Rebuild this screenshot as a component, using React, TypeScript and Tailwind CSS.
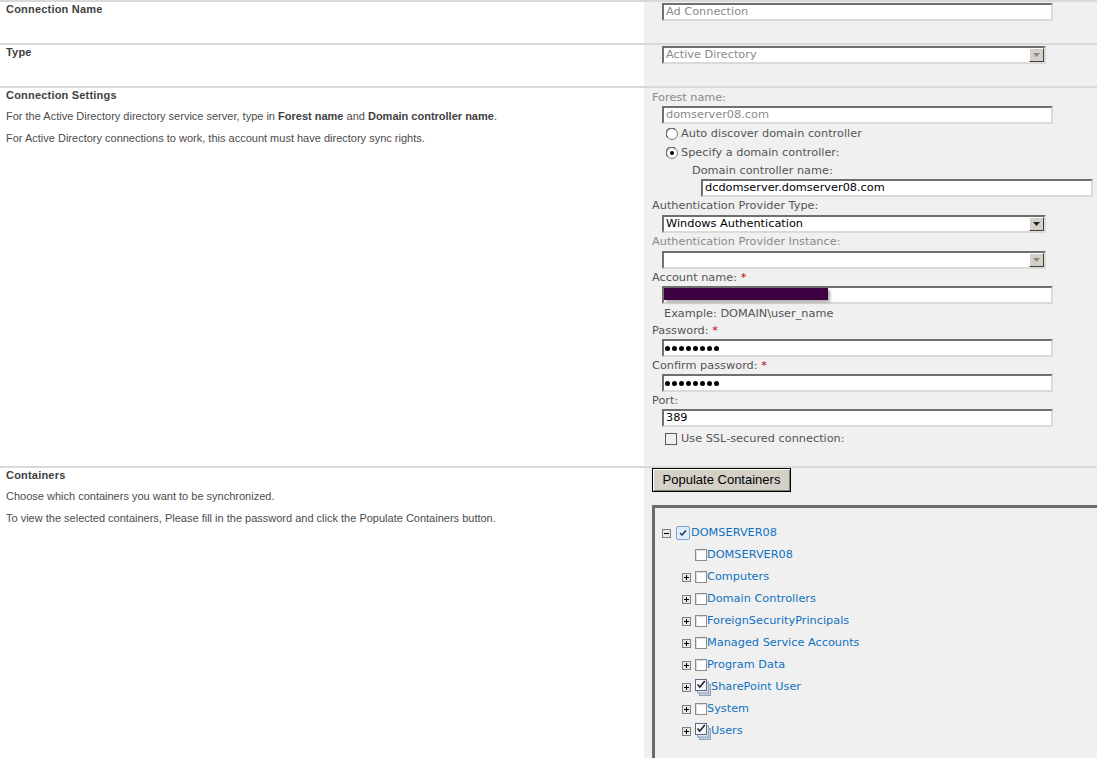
import React from "react";

const inputCls =
  "block h-[18px] bg-white border-solid border-t-2 border-l-2 border-b-2 border-r-2 border-t-[#6f6f6f] border-l-[#6f6f6f] border-b-[#dcdad5] border-r-[#dcdad5] px-[2px] text-[11.3px] leading-[14px] outline-none";

function Field({ value, className = "", muted = false }: { value: string; className?: string; muted?: boolean }) {
  return (
    <div className={`${inputCls} ${muted ? "text-[#8a8a8a]" : "text-black"} ${className}`}>{value}</div>
  );
}

function Dots() {
  return (
    <div className={`${inputCls} ml-[10px] flex w-[391px] items-center gap-[2px] pl-[1px]`}>
      {[0, 1, 2, 3, 4, 5, 6, 7].map((i) => (
        <span key={i} className="block h-[5px] w-[5px] rounded-full bg-black" />
      ))}
    </div>
  );
}

function SelectBox({ value, disabled = false, className = "" }: { value: string; disabled?: boolean; className?: string }) {
  return (
    <div className={`${inputCls} relative w-[384px] ${disabled ? "text-[#8a8a8a]" : "text-black"} ${className}`}>
      <span>{value}</span>
      <span className="absolute right-0 top-0 flex h-[14px] w-[15px] items-center justify-center bg-[#d4d0c8] border border-solid border-t-white border-l-white border-b-[#404040] border-r-[#404040]">
        <svg width="7" height="4" viewBox="0 0 7 4">
          <path d="M0 0h7L3.5 4z" fill={disabled ? "#8a8a8a" : "#202020"} />
        </svg>
      </span>
    </div>
  );
}

function Radio({ checked }: { checked?: boolean }) {
  return (
    <svg width="12" height="12" viewBox="0 0 12 12" className="shrink-0">
      <circle cx="6" cy="6" r="5.5" fill="#fff" stroke="#808080" />
      <path d="M1.5 9.5A5 5 0 0 1 9.5 1.5" fill="none" stroke="#404040" />
      {checked && <circle cx="6" cy="6" r="2" fill="#000" />}
    </svg>
  );
}

function Star() {
  return <span className="text-[#bf0000]"> *</span>;
}

function Expander({ open }: { open?: boolean }) {
  return (
    <svg width="9" height="9" viewBox="0 0 9 9" className="shrink-0">
      <rect x="0.5" y="0.5" width="8" height="8" fill="#e8e8e4" stroke="#7f7f7f" />
      <path d="M2 4.5h5" stroke="#000" />
      {!open && <path d="M4.5 2v5" stroke="#000" />}
    </svg>
  );
}

function Box({ state }: { state: "off" | "on" | "partial" }) {
  if (state === "on")
    return (
      <svg width="14" height="14" viewBox="0 0 14 14" className="shrink-0">
        <rect x="0.5" y="0.5" width="13" height="13" rx="1.5" fill="#dcecfa" stroke="#7aa6d0" />
        <path d="M4 7l2 2 4-4.5" fill="none" stroke="#1c2c4a" strokeWidth="1.4" />
      </svg>
    );
  if (state === "partial")
    return (
      <svg width="16" height="17" viewBox="0 0 16 17" className="shrink-0">
        <rect x="4.5" y="5.5" width="11" height="11" fill="#c3cfde" stroke="#93a3b8" />
        <rect x="2.5" y="3" width="11" height="11" fill="#d9e1eb" stroke="#93a3b8" />
        <rect x="0.5" y="0.5" width="11" height="11" fill="#f4f6f9" stroke="#5a6c85" />
        <path d="M2.5 5.5l2.3 2.5 5-6" fill="none" stroke="#202020" strokeWidth="1.5" />
      </svg>
    );
  return (
    <svg width="12" height="12" viewBox="0 0 12 12" className="shrink-0">
      <rect x="0.5" y="0.5" width="11" height="11" fill="#fff" stroke="#8c8c8c" />
      <path d="M1.5 10.5v-9h9" fill="none" stroke="#dadada" />
    </svg>
  );
}

const treeItems: { label: string; state: "off" | "partial" }[] = [
  { label: "Computers", state: "off" },
  { label: "Domain Controllers", state: "off" },
  { label: "ForeignSecurityPrincipals", state: "off" },
  { label: "Managed Service Accounts", state: "off" },
  { label: "Program Data", state: "off" },
  { label: "SharePoint User", state: "partial" },
  { label: "System", state: "off" },
  { label: "Users", state: "partial" },
];

function Section({
  title,
  children,
  desc,
  className = "",
  rightClass = "",
}: {
  title: string;
  desc?: React.ReactNode;
  children: React.ReactNode;
  className?: string;
  rightClass?: string;
}) {
  return (
    <div className={`grid grid-cols-[644px_1fr] border-t-2 border-[#d9d9d9] ${className}`}>
      <div className="bg-white px-[6px] font-['Liberation_Sans',Tahoma,sans-serif] text-[11px] text-[#4c4c4c]">
        <div className="font-bold leading-[14px] tracking-[0.2px] text-[#3f3f3f]">{title}</div>
        {desc}
      </div>
      <div className={`bg-[#f0f0f0] font-['DejaVu_Sans',Verdana,sans-serif] text-[11.3px] text-[#555] ${rightClass}`}>
        {children}
      </div>
    </div>
  );
}

export default function App() {
  return (
    <div className="h-[758px] w-[1097px] overflow-hidden bg-white">
      <Section title="Connection Name" className="h-[43px]" rightClass="pl-[18px] pt-[1px]">
        <Field value="Ad Connection" muted className="w-[391px]" />
      </Section>

      <Section title="Type" className="h-[43px]" rightClass="pl-[18px] pt-[1px]">
        <SelectBox value="Active Directory" disabled />
      </Section>

      <Section
        title="Connection Settings"
        className="h-[380px]"
        rightClass="pl-[8px] pt-[1px] leading-[17px]"
        desc={
          <div className="mt-[8px] flex flex-col gap-[9px] leading-[13px]">
            <p>
              For the Active Directory directory service server, type in <b className="text-[#3f3f3f]">Forest name</b> and{" "}
              <b className="text-[#3f3f3f]">Domain controller name</b>.
            </p>
            <p>For Active Directory connections to work, this account must have directory sync rights.</p>
          </div>
        }
      >
        <div className="text-[#8a8a8a]">Forest name:</div>
        <Field value="domserver08.com" muted className="ml-[10px] w-[391px]" />
        <div className="ml-[14px] flex h-[19px] items-center gap-[3px]">
          <Radio />
          <span>Auto discover domain controller</span>
        </div>
        <div className="ml-[14px] flex h-[19px] items-center gap-[3px]">
          <Radio checked />
          <span>Specify a domain controller:</span>
        </div>
        <div className="ml-[40px]">Domain controller name:</div>
        <Field value="dcdomserver.domserver08.com" className="ml-[49px] w-[392px]" />
        <div>Authentication Provider Type:</div>
        <SelectBox value="Windows Authentication" className="ml-[10px] mt-[1px]" />
        <div className="text-[#8a8a8a]">Authentication Provider Instance:</div>
        <SelectBox value="" disabled className="ml-[10px] mt-[1px]" />
        <div>
          Account name:
          <Star />
        </div>
        <div className={`${inputCls} relative ml-[10px] w-[391px]`}>
          <span className="absolute left-0 top-0 h-[12px] w-[164px] bg-[#3e0040] shadow-[2px_2px_3px_rgba(0,0,0,0.35)]" />
        </div>
        <div className="ml-[12px] mt-[1px]">Example: DOMAIN\user_name</div>
        <div>
          Password:
          <Star />
        </div>
        <Dots />
        <div>
          Confirm password:
          <Star />
        </div>
        <Dots />
        <div>Port:</div>
        <Field value="389" className="ml-[10px] w-[391px]" />
        <div className="ml-[13px] mt-[3px] flex items-center gap-[4px]">
          <span className="block h-[12px] w-[12px] border border-solid border-[#5a5a5a] bg-transparent" />
          <span>Use SSL-secured connection:</span>
        </div>
      </Section>

      <Section
        title="Containers"
        className="h-[292px]"
        rightClass="pl-[8px]"
        desc={
          <div className="mt-[8px] flex flex-col gap-[9px] leading-[13px]">
            <p>Choose which containers you want to be synchronized.</p>
            <p>To view the selected containers, Please fill in the password and click the Populate Containers button.</p>
          </div>
        }
      >
        <button className="block h-[24px] w-[139px] border border-solid border-black bg-[#d4d0c8] font-['Liberation_Sans',Arial,sans-serif] text-[13px] text-black shadow-[inset_1px_1px_0_#fff,inset_-1px_-1px_0_#808080]">
          Populate Containers
        </button>
        <div className="mt-[13px] h-[300px] border-l-[3px] border-t-[3px] border-solid border-[#6b6b6b] pl-[7px] pt-[14px] text-[#0f72c1]">
          <div className="flex h-[22px] items-center">
            <span className="mr-[5px] flex">
              <Expander open />
            </span>
            <Box state="on" />
            <span className="ml-[1px]">DOMSERVER08</span>
          </div>
          <div className="ml-[33px] flex h-[22px] items-center">
            <Box state="off" />
            <span>DOMSERVER08</span>
          </div>
          {treeItems.map((it) => (
            <div key={it.label} className="ml-[20px] flex h-[22px] items-center">
              <span className="mr-[4px] flex">
                <Expander />
              </span>
              <Box state={it.state} />
              <span>{it.label}</span>
            </div>
          ))}
        </div>
      </Section>
    </div>
  );
}
